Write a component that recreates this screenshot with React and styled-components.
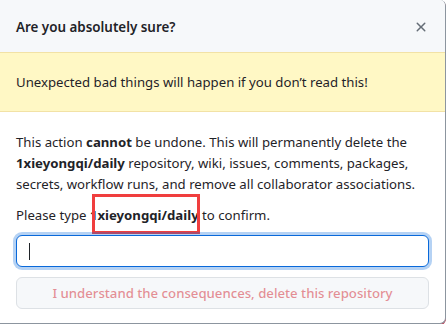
import styled, { createGlobalStyle } from "styled-components";

const Global = createGlobalStyle`
  body {
    margin: 0;
    background: #ffffff;
    font-family: "Noto Sans", "Open Sans", sans-serif;
    color: #1f2328;
  }
`;

const Dialog = styled.div`
  position: relative;
  width: 446px;
  height: 324px;
  box-sizing: border-box;
  background: #ffffff;
  border-right: 1px solid #8c959f;
  border-bottom: 1px solid #8c959f;
  border-radius: 0 6px 6px 0;
  box-shadow: 0 1px 0 #c0394f;
  display: flex;
  flex-direction: column;
  overflow: hidden;
  font-size: 13.2px;
`;

const Header = styled.div`
  height: 52px;
  box-sizing: border-box;
  padding: 2px 16px 0;
  display: flex;
  align-items: center;
  justify-content: space-between;
  background: #f6f8fa;
`;

const Title = styled.h3`
  margin: 0;
  font-size: 13.4px;
  font-weight: 600;
`;

const CloseButton = styled.button`
  border: 0;
  background: none;
  padding: 0;
  width: 16px;
  height: 16px;
  color: #656d76;
  display: flex;
  align-items: center;
  justify-content: center;
`;

const Flash = styled.div`
  padding: 19px 16px;
  background: #fff8c5;
  border-top: 1px solid #f2e2a6;
  border-bottom: 1px solid #f2e2a6;
  line-height: 20px;
`;

const Body = styled.div`
  padding: 20px 16px 0;
  line-height: 21px;
`;

const Paragraph = styled.p`
  margin: 0 0 ${(p) => (p.$last ? "0" : "10px")};
`;

const Marked = styled.strong`
  position: relative;

  &::after {
    content: "";
    position: absolute;
    left: 2px;
    right: -1px;
    top: -12px;
    bottom: -10px;
    border: 3px solid #f03e3e;
    pointer-events: none;
  }
`;

const FieldWrap = styled.div`
  position: relative;
  margin-top: 9px;
`;

const Field = styled.input`
  display: block;
  width: 100%;
  height: 32px;
  box-sizing: border-box;
  padding: 0 12px;
  border: 1px solid #0969da;
  border-radius: 6px;
  box-shadow: 0 0 0 3px rgba(9, 105, 218, 0.3);
  outline: none;
  font: inherit;
`;

const Caret = styled.span`
  position: absolute;
  left: 13px;
  top: 8px;
  width: 1px;
  height: 17px;
  background: #1f2328;
`;

const DangerButton = styled.button`
  display: block;
  width: 100%;
  height: 32px;
  margin-top: 10px;
  border: 1px solid #dde1e5;
  border-radius: 6px;
  background: #f6f8fa;
  color: rgba(209, 36, 47, 0.5);
  font: inherit;
  font-weight: 500;
`;

export default function App() {
  return (
    <>
      <Global />
      <Dialog>
        <Header>
          <Title>Are you absolutely sure?</Title>
          <CloseButton aria-label="Close">
            <svg width="16" height="16" viewBox="0 0 16 16" fill="currentColor">
              <path d="M3.72 3.72a.75.75 0 0 1 1.06 0L8 6.94l3.22-3.22a.75.75 0 1 1 1.06 1.06L9.06 8l3.22 3.22a.75.75 0 1 1-1.06 1.06L8 9.06l-3.22 3.22a.75.75 0 0 1-1.06-1.06L6.94 8 3.72 4.78a.75.75 0 0 1 0-1.06Z" />
            </svg>
          </CloseButton>
        </Header>
        <Flash>Unexpected bad things will happen if you don’t read this!</Flash>
        <Body>
          <Paragraph>
            This action <strong>cannot</strong> be undone. This will permanently
            delete the <strong>1xieyongqi/daily</strong> repository, wiki,
            issues, comments, packages, secrets, workflow runs, and remove all
            collaborator associations.
          </Paragraph>
          <Paragraph $last>
            Please type <Marked>1xieyongqi/daily</Marked> to confirm.
          </Paragraph>
          <FieldWrap>
            <Field aria-label="Repository name" />
            <Caret />
          </FieldWrap>
          <DangerButton disabled>
            I understand the consequences, delete this repository
          </DangerButton>
        </Body>
      </Dialog>
    </>
  );
}
